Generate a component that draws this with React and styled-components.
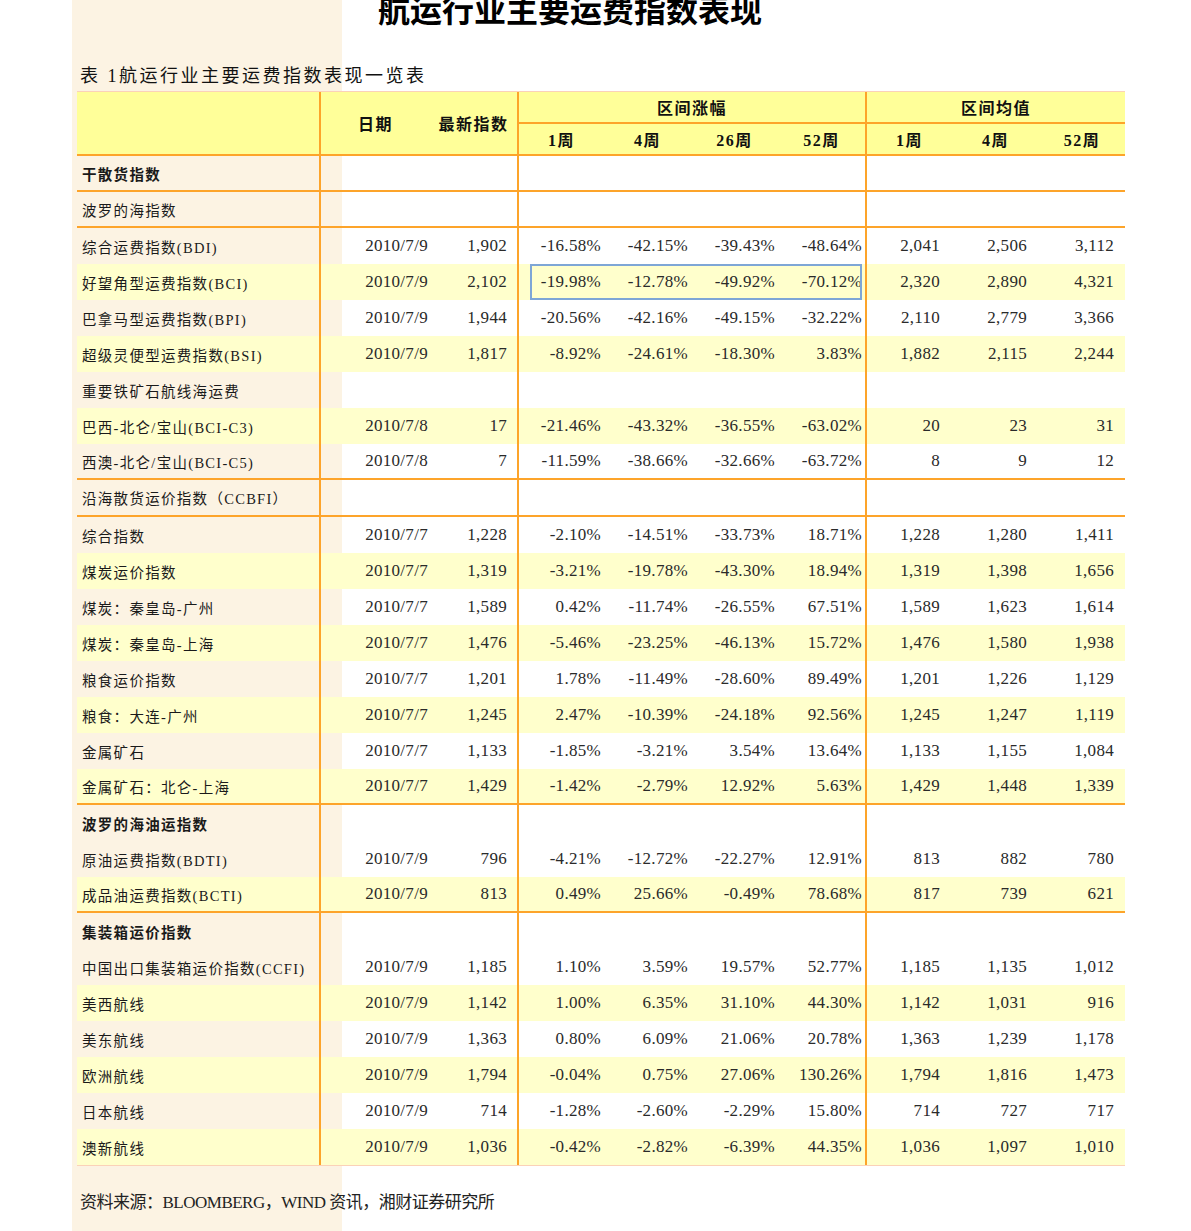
import React from 'react';
import styled, { createGlobalStyle } from 'styled-components';

const GlobalStyle = createGlobalStyle`
  html, body {
    margin: 0;
    padding: 0;
  }
  body {
    min-height: 100vh;
    font-family: "Liberation Serif", "Noto Sans CJK SC", serif;
    color: #222;
    /* the beige band that runs down the left of the scanned page */
    background: linear-gradient(
      to right,
      #ffffff 0,
      #ffffff 72px,
      #fcf3e3 72px,
      #fcf3e3 342px,
      #ffffff 342px
    );
  }
`;

const COLS = '242px 111px 87px 87px 87px 87px 87px 87px 87px 86px';
const ORANGE = '#fda42a';
const PEACH = '#fbd2b8';

// right padding of each value column, taken from the reference
const PAD = [2, 10, 3, 3, 3, 3, 12, 12, 11];
// columns that carry an orange rule on their left edge
const LINED = [0, 2, 6];

const Page = styled.div`
  display: flex;
  flex-direction: column;
  width: 1191px;
  padding-bottom: 16px;
`;

const Title = styled.h1`
  margin: -8px 0 0 0;
  width: 1140px;
  text-align: center;
  font-family: "Noto Sans CJK SC", sans-serif;
  font-weight: 700;
  font-size: 32px;
  line-height: 32px;
  color: #000;
`;

const Caption = styled.div`
  margin: 40px 0 3px 80px;
  font-family: "Liberation Serif", "Noto Sans CJK SC", serif;
  font-size: 18px;
  line-height: 24px;
  letter-spacing: 2.5px;
  color: #111;
`;

const Sheet = styled.div`
  margin-left: 77px;
  width: 1048px;
  border-top: 1px solid ${PEACH};
  border-bottom: 1px solid ${PEACH};
`;

const Head = styled.div`
  display: grid;
  grid-template-columns: ${COLS};
  grid-template-rows: 32px 30px;
  background: #ffff99;
  border-bottom: 2px solid ${ORANGE};
`;

const HeadCell = styled.div`
  box-sizing: border-box;
  grid-column: ${(p) => p.$col};
  grid-row: ${(p) => p.$row};
  display: flex;
  align-items: center;
  justify-content: center;
  font-weight: 700;
  font-size: 16px;
  letter-spacing: 1.5px;
  color: #111;
  border-left: ${(p) => (p.$line ? `2px solid ${ORANGE}` : 'none')};
  border-bottom: ${(p) => (p.$under ? `2px solid ${ORANGE}` : 'none')};
`;

const Row = styled.div`
  position: relative;
  box-sizing: border-box;
  display: grid;
  grid-template-columns: ${COLS};
  height: ${(p) => (p.$tall ? 37 : 36)}px;
  background: ${(p) => (p.$tone === 'yellow' ? '#ffffcc' : 'transparent')};
  border-bottom: ${(p) => (p.$rule ? `2px solid ${ORANGE}` : 'none')};
`;

const Label = styled.div`
  display: flex;
  align-items: center;
  padding-left: 5px;
  font-size: 14.5px;
  letter-spacing: 1.3px;
  font-weight: ${(p) => (p.$bold ? 700 : 400)};
  white-space: nowrap;
  color: #1a1a1a;
`;

const Value = styled.div`
  box-sizing: border-box;
  display: flex;
  align-items: center;
  justify-content: flex-end;
  padding-right: ${(p) => p.$pad}px;
  font-size: 17px;
  letter-spacing: 0.3px;
  white-space: nowrap;
  color: #2a2a2a;
  border-left: ${(p) => (p.$line ? `2px solid ${ORANGE}` : 'none')};
`;

const Selection = styled.div`
  position: absolute;
  left: 453px;
  top: 0;
  width: 332px;
  height: 36px;
  box-sizing: border-box;
  border: 2px solid #7ea6d6;
  pointer-events: none;
`;

const Source = styled.div`
  margin: 25px 0 0 80px;
  font-size: 17px;
  line-height: 24px;
  letter-spacing: -0.5px;
  color: #222;
`;

const rows = [
  { label: '干散货指数', bold: true, rule: true },
  { label: '波罗的海指数', rule: true },
  { label: '综合运费指数(BDI)', v: ['2010/7/9', '1,902', '-16.58%', '-42.15%', '-39.43%', '-48.64%', '2,041', '2,506', '3,112'] },
  { label: '好望角型运费指数(BCI)', tone: 'yellow', selected: true, v: ['2010/7/9', '2,102', '-19.98%', '-12.78%', '-49.92%', '-70.12%', '2,320', '2,890', '4,321'] },
  { label: '巴拿马型运费指数(BPI)', v: ['2010/7/9', '1,944', '-20.56%', '-42.16%', '-49.15%', '-32.22%', '2,110', '2,779', '3,366'] },
  { label: '超级灵便型运费指数(BSI)', tone: 'yellow', v: ['2010/7/9', '1,817', '-8.92%', '-24.61%', '-18.30%', '3.83%', '1,882', '2,115', '2,244'] },
  { label: '重要铁矿石航线海运费' },
  { label: '巴西-北仑/宝山(BCI-C3)', tone: 'yellow', v: ['2010/7/8', '17', '-21.46%', '-43.32%', '-36.55%', '-63.02%', '20', '23', '31'] },
  { label: '西澳-北仑/宝山(BCI-C5)', rule: true, v: ['2010/7/8', '7', '-11.59%', '-38.66%', '-32.66%', '-63.72%', '8', '9', '12'] },
  { label: '沿海散货运价指数（CCBFI）', rule: true, tall: true },
  { label: '综合指数', v: ['2010/7/7', '1,228', '-2.10%', '-14.51%', '-33.73%', '18.71%', '1,228', '1,280', '1,411'] },
  { label: '煤炭运价指数', tone: 'yellow', v: ['2010/7/7', '1,319', '-3.21%', '-19.78%', '-43.30%', '18.94%', '1,319', '1,398', '1,656'] },
  { label: '煤炭：秦皇岛-广州', v: ['2010/7/7', '1,589', '0.42%', '-11.74%', '-26.55%', '67.51%', '1,589', '1,623', '1,614'] },
  { label: '煤炭：秦皇岛-上海', tone: 'yellow', v: ['2010/7/7', '1,476', '-5.46%', '-23.25%', '-46.13%', '15.72%', '1,476', '1,580', '1,938'] },
  { label: '粮食运价指数', v: ['2010/7/7', '1,201', '1.78%', '-11.49%', '-28.60%', '89.49%', '1,201', '1,226', '1,129'] },
  { label: '粮食：大连-广州', tone: 'yellow', v: ['2010/7/7', '1,245', '2.47%', '-10.39%', '-24.18%', '92.56%', '1,245', '1,247', '1,119'] },
  { label: '金属矿石', v: ['2010/7/7', '1,133', '-1.85%', '-3.21%', '3.54%', '13.64%', '1,133', '1,155', '1,084'] },
  { label: '金属矿石：北仑-上海', tone: 'yellow', rule: true, v: ['2010/7/7', '1,429', '-1.42%', '-2.79%', '12.92%', '5.63%', '1,429', '1,448', '1,339'] },
  { label: '波罗的海油运指数', bold: true },
  { label: '原油运费指数(BDTI)', v: ['2010/7/9', '796', '-4.21%', '-12.72%', '-22.27%', '12.91%', '813', '882', '780'] },
  { label: '成品油运费指数(BCTI)', tone: 'yellow', rule: true, v: ['2010/7/9', '813', '0.49%', '25.66%', '-0.49%', '78.68%', '817', '739', '621'] },
  { label: '集装箱运价指数', bold: true },
  { label: '中国出口集装箱运价指数(CCFI)', v: ['2010/7/9', '1,185', '1.10%', '3.59%', '19.57%', '52.77%', '1,185', '1,135', '1,012'] },
  { label: '美西航线', tone: 'yellow', v: ['2010/7/9', '1,142', '1.00%', '6.35%', '31.10%', '44.30%', '1,142', '1,031', '916'] },
  { label: '美东航线', v: ['2010/7/9', '1,363', '0.80%', '6.09%', '21.06%', '20.78%', '1,363', '1,239', '1,178'] },
  { label: '欧洲航线', tone: 'yellow', v: ['2010/7/9', '1,794', '-0.04%', '0.75%', '27.06%', '130.26%', '1,794', '1,816', '1,473'] },
  { label: '日本航线', v: ['2010/7/9', '714', '-1.28%', '-2.60%', '-2.29%', '15.80%', '714', '727', '717'] },
  { label: '澳新航线', tone: 'yellow', v: ['2010/7/9', '1,036', '-0.42%', '-2.82%', '-6.39%', '44.35%', '1,036', '1,097', '1,010'] },
];

const TableHead = () => (
  <Head>
    <HeadCell $col="1" $row="1 / 3" />
    <HeadCell $col="2" $row="1 / 3" $line>日期</HeadCell>
    <HeadCell $col="3" $row="1 / 3">最新指数</HeadCell>
    <HeadCell $col="4 / 8" $row="1" $line $under>区间涨幅</HeadCell>
    <HeadCell $col="8 / 11" $row="1" $line $under>区间均值</HeadCell>
    <HeadCell $col="4" $row="2" $line>1周</HeadCell>
    <HeadCell $col="5" $row="2">4周</HeadCell>
    <HeadCell $col="6" $row="2">26周</HeadCell>
    <HeadCell $col="7" $row="2">52周</HeadCell>
    <HeadCell $col="8" $row="2" $line>1周</HeadCell>
    <HeadCell $col="9" $row="2">4周</HeadCell>
    <HeadCell $col="10" $row="2">52周</HeadCell>
  </Head>
);

const App = () => {
  return (
    <>
      <GlobalStyle />
      <Page>
        <Title>航运行业主要运费指数表现</Title>
        <Caption>表 1航运行业主要运费指数表现一览表</Caption>
        <Sheet>
          <TableHead />
          {rows.map((r) => (
            <Row key={r.label} $tone={r.tone} $rule={r.rule} $tall={r.tall}>
              <Label $bold={r.bold}>{r.label}</Label>
              {PAD.map((pad, i) => (
                <Value key={i} $pad={pad} $line={LINED.includes(i)}>
                  {r.v ? r.v[i] : ''}
                </Value>
              ))}
              {r.selected && <Selection />}
            </Row>
          ))}
        </Sheet>
        <Source>资料来源：BLOOMBERG，WIND 资讯，湘财证券研究所</Source>
      </Page>
    </>
  );
};

export default App;
